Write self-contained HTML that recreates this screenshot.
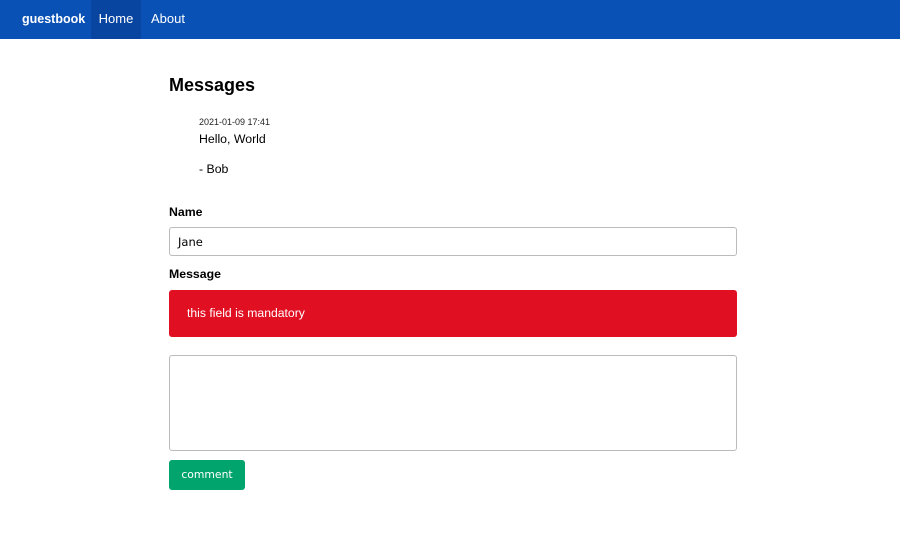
<!DOCTYPE html>
<html><head><meta charset="utf-8"><style>
body{margin:0;width:900px;height:535px;background:#fff;font-family:"Liberation Sans",Arial,sans-serif;color:#000;position:relative;overflow:hidden}
nav{position:absolute;left:0;top:0;width:900px;height:39px;background:#0a51b6}
nav a{position:absolute;top:0;height:39px;line-height:38px;color:#fff;font-size:13px;text-decoration:none}
.abs{position:absolute}
.inp{position:absolute;left:169px;width:566px;border:1px solid #bbb;border-radius:3px;background:#fff}
</style></head><body>
<nav>
<a style="left:22px;font-weight:bold;font-size:12.5px">guestbook</a>
<a style="left:91px;width:50px;background:#0845a0;text-align:center">Home</a>
<a style="left:151px">About</a>
</nav>
<div class="abs" style="left:169px;top:75px;font-size:18px;font-weight:bold">Messages</div>
<div class="abs" style="left:199px;top:117px;font-size:9px;color:#222">2021-01-09 17:41</div>
<div class="abs" style="left:199px;top:132px;font-size:12.3px">Hello, World</div>
<div class="abs" style="left:199px;top:162px;font-size:12.3px">- Bob</div>
<div class="abs" style="left:169px;top:205px;font-size:12.3px;font-weight:bold">Name</div>
<div class="inp" style="top:227px;height:27px;"><span style="position:absolute;left:8px;top:7px;font-family:'DejaVu Sans',sans-serif;font-size:11.5px">Jane</span></div>
<div class="abs" style="left:169px;top:267px;font-size:12.3px;font-weight:bold">Message</div>
<div class="abs" style="left:169px;top:290px;width:568px;height:47px;background:#e00f22;border-radius:3px"><span style="position:absolute;left:18px;top:16px;color:#fff;font-size:12.2px">this field is mandatory</span></div>
<div class="inp" style="top:355px;height:94px"></div>
<div class="abs" style="left:169px;top:460px;width:76px;height:30px;background:#02a46e;border-radius:3px;color:#fff;font-family:'DejaVu Sans',sans-serif;font-size:10.8px;text-align:center;line-height:30px">comment</div>
</body></html>
